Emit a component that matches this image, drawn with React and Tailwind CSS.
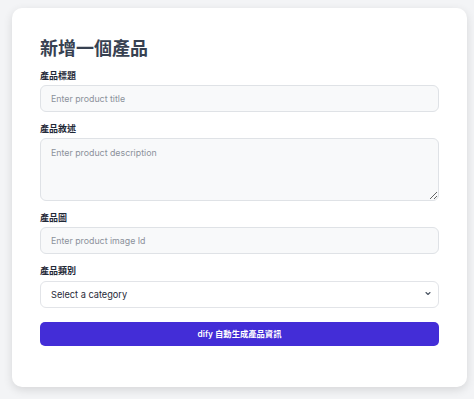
import { useState } from "react";

const Field = ({ label, children, className = "" }) => {
    return (
        <div className={"flex flex-col " + className}>
            <label className="text-[9px] leading-[12px] font-bold text-[#1f2937] mb-[3px]">
                {label}
            </label>
            {children}
        </div>
    )
}

const App = () => {
    const [title, setTitle] = useState("")
    const [desc, setDesc] = useState("")
    const [image, setImage] = useState("")
    const [category, setCategory] = useState("")

    return (
        <div className="min-h-[399px] w-[474px] bg-[#f3f4f6] pt-[8px] pl-[12px] font-['Inter','Noto_Sans_CJK_TC',sans-serif]">
            <div className="w-[455px] h-[379px] bg-white rounded-[10px] shadow-[0_3px_10px_rgba(0,0,0,0.12)] px-[28px] pt-[29px]">
                <h1 className="text-[18px] leading-[24px] font-bold text-[#374151] mb-[9px]">新增一個產品</h1>

                <Field label="產品標題">
                    <input
                        type="text"
                        value={title}
                        onChange={(e) => setTitle(e.target.value)}
                        placeholder="Enter product title"
                        className="h-[27px] w-full rounded-[6px] border border-[#dfe2e6] bg-[#f8f9fa] px-[10px] text-[8.8px] text-[#374151] placeholder:text-[#8b919a] outline-none"
                    />
                </Field>

                <Field label="產品敘述" className="mt-[11px]">
                    <textarea
                        value={desc}
                        onChange={(e) => setDesc(e.target.value)}
                        placeholder="Enter product description"
                        className="h-[63px] w-full rounded-[6px] border border-[#dfe2e6] bg-[#f8f9fa] px-[10px] py-[8px] text-[8.8px] leading-[12px] text-[#374151] placeholder:text-[#8b919a] outline-none"
                    />
                </Field>

                <Field label="產品圖" className="mt-[11px]">
                    <input
                        type="text"
                        value={image}
                        onChange={(e) => setImage(e.target.value)}
                        placeholder="Enter product image Id"
                        className="h-[27px] w-full rounded-[6px] border border-[#dfe2e6] bg-[#f8f9fa] px-[10px] text-[8.8px] text-[#374151] placeholder:text-[#8b919a] outline-none"
                    />
                </Field>

                <Field label="產品類別" className="mt-[11px]">
                    <div className="relative">
                        <select
                            value={category}
                            onChange={(e) => setCategory(e.target.value)}
                            className="h-[27px] w-full appearance-none rounded-[6px] border border-[#e2e4e8] bg-white px-[10px] text-[9.2px] text-[#1f2937] outline-none"
                        >
                            <option value="">Select a category</option>
                            <option value="food">Food</option>
                            <option value="tech">Tech</option>
                        </select>
                        <svg className="pointer-events-none absolute right-[8px] top-[11px]" width="6" height="5" viewBox="0 0 6 5" fill="none">
                            <path d="M1 1.5l2 2 2-2" stroke="#4b5563" strokeWidth="1.1" strokeLinecap="round" strokeLinejoin="round" />
                        </svg>
                    </div>
                </Field>

                <button className="mt-[14px] h-[24px] w-full rounded-[5px] bg-[#432dd7] text-[8.3px] font-semibold text-white">
                    dify 自動生成產品資訊
                </button>
            </div>
        </div>
    )
}

export default App;
